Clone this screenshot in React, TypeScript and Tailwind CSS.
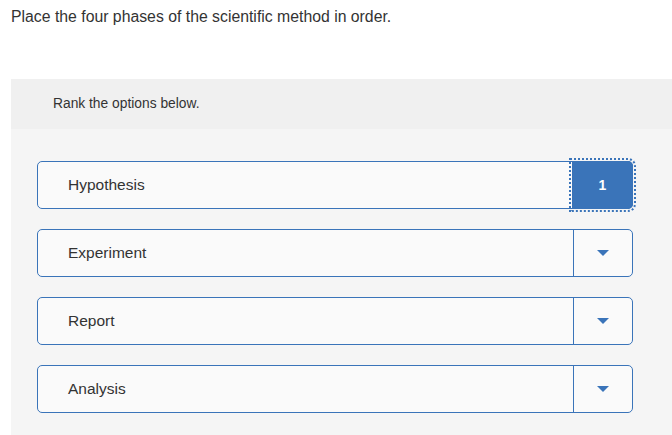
const options = ["Hypothesis", "Experiment", "Report", "Analysis"];

function Caret() {
  return (
    <svg width="12" height="6" viewBox="0 0 12 6" className="block">
      <path d="M0 0 H12 L6 6 Z" fill="#3a74b9" />
    </svg>
  );
}

export default function App() {
  return (
    <div className="h-[435px] w-[672px] overflow-hidden bg-white font-['Liberation_Sans',Arial,sans-serif] text-[#333]">
      <p className="pl-[11px] pt-[7px] text-[15.8px] leading-5">
        Place the four phases of the scientific method in order.
      </p>
      <div className="ml-[11px] mt-[52px] bg-[#f5f5f5]">
        <div className="flex h-[50px] items-center bg-[#f0f0f0] pl-[42px] text-[13.8px]">
          Rank the options below.
        </div>
        <ul className="flex flex-col gap-[20px] pl-[26px] pr-[39px] pt-[32px] pb-[30px]">
          {options.map((label, i) => (
            <li
              key={label}
              className="flex h-[48px] rounded-[5px] border border-[#3a74b9] bg-[#fafafa]"
            >
              <span className="flex flex-1 items-center pl-[30px] text-[15.5px]">
                {label}
              </span>
              {i === 0 ? (
                <span className="relative -my-px -mr-px flex w-[61px] items-center justify-center rounded-r-[5px] bg-[#3a74b9] text-[14px] font-bold text-white outline-2 outline-offset-1 outline-dotted outline-[#3a74b9]">
                  1
                </span>
              ) : (
                <span className="flex w-[59px] items-center justify-center border-l border-[#3a74b9]">
                  <Caret />
                </span>
              )}
            </li>
          ))}
        </ul>
      </div>
    </div>
  );
}
